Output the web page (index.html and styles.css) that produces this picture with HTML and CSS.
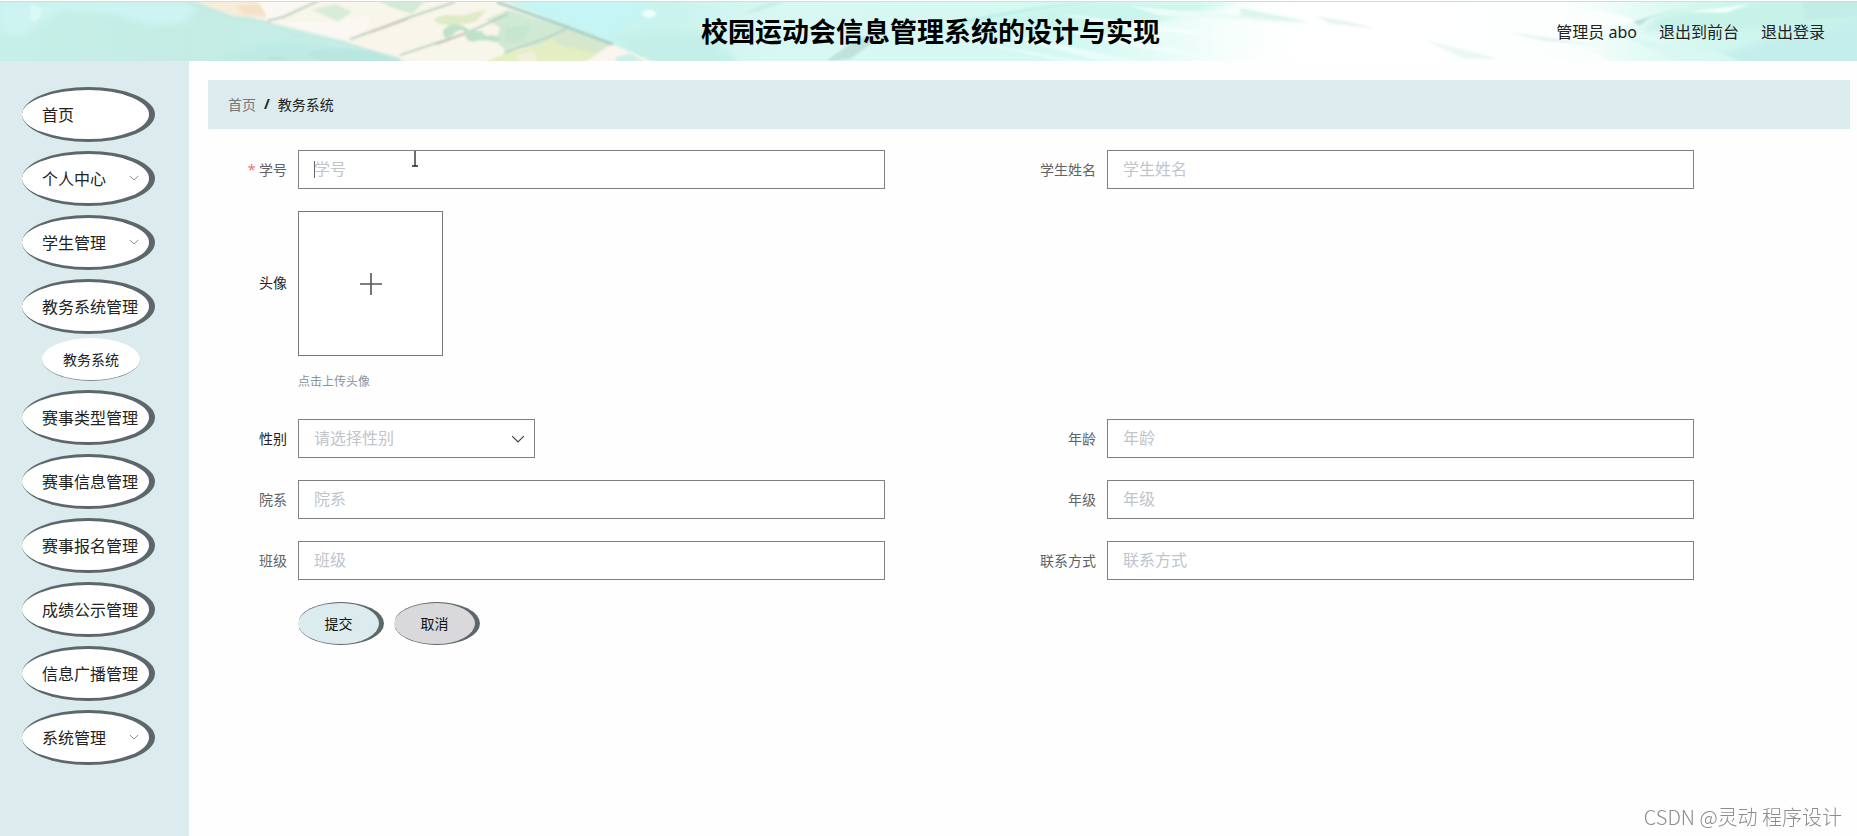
FILE: index.html
```
<!DOCTYPE html>
<html lang="zh-CN">
<head>
  <meta charset="UTF-8" />
  <meta name="viewport" content="width=device-width, initial-scale=1" />
  <title>校园运动会信息管理系统的设计与实现</title>
  <link rel="stylesheet" href="styles.css">
</head>
<body>

  <svg class="defs" aria-hidden="true">
    <symbol id="arrow" viewBox="0 0 12 12">
      <path d="M1 3.5 L6 8.5 L11 3.5" fill="none" stroke="currentColor" stroke-width="1.1" />
    </symbol>
  </svg>

  <header class="header">
    <svg class="header-bg" viewBox="0 0 1857 60" preserveAspectRatio="none" aria-hidden="true">
      <defs>
        <linearGradient id="base" x1="0" x2="1" y1="0" y2="0">
          <stop offset="0" stop-color="#c6efe9" />
          <stop offset="0.1" stop-color="#c4ece4" />
          <stop offset="0.3" stop-color="#c9f4ef" />
          <stop offset="0.36" stop-color="#caf3ee" />
          <stop offset="0.42" stop-color="#d8f8f3" />
          <stop offset="0.58" stop-color="#d4f8f2" />
          <stop offset="0.66" stop-color="#f6fefc" />
          <stop offset="0.7" stop-color="#ffffff" />
          <stop offset="0.84" stop-color="#fdfffe" />
          <stop offset="0.91" stop-color="#d5f8f0" />
          <stop offset="1" stop-color="#c3f1ea" />
        </linearGradient>
        <filter id="soft"><feGaussianBlur stdDeviation="1" /></filter>
        <filter id="softer"><feGaussianBlur stdDeviation="4" /></filter>
      </defs>
      <rect width="1857" height="60" fill="url(#base)" />

      <g filter="url(#softer)">
        <path d="M0 0 H200 L185 22 L150 24 L112 12 L60 8 L40 22 L24 34 L0 32 Z" fill="#cdf4f2" />
        <path d="M205 64 L240 48 L290 38 L340 46 L410 64 Z" fill="#bdebe3" />
        <path d="M500 -6 H625 L655 6 L622 22 L612 42 Z" fill="#c5f5f4" />
        <path d="M612 34 L660 30 L710 32 L740 64 H640 Z" fill="#c4efe9" />
        <path d="M980 20 L1090 0 H1240 L1110 30 L1010 32 Z" fill="#c9f5ec" />
        <path d="M1660 14 L1740 2 H1860 V14 L1760 26 L1640 30 Z" fill="#c6f2e8" />
        <path d="M1690 64 L1780 34 L1860 24 V64 Z" fill="#c4eeec" />
      </g>

      <!-- stadium roof on the left -->
      <g filter="url(#soft)">
        <path d="M186 -4 H498 L613 43 L660 64 H408 L345 40 L266 20 Z" fill="#f8f5ea" />
        <path d="M186 -4 H256 L266 17 L232 14 Z" fill="#f5ecda" />
        <path d="M236 4 L262 2 L266 14 L244 13 Z" fill="#f4e1c8" />
        <path d="M256 -4 H314 L270 19 Z" fill="#fbf8f4" />
        <path d="M312 8 L336 2 L352 10 L338 20 Z" fill="#d9ecdc" />
        <path d="M374 -4 H428 L412 12 L390 5 Z" fill="#d3ead8" />
        <path d="M340 20 L372 12 L366 28 L344 38 L276 20 Z" fill="#fbf8f3" />
        <path d="M434 18 Q440 11 462 14 L486 8 L476 20 L452 24 L438 22 Z" fill="#deebc6" />
        <path d="M508 8 L568 27 L540 44 L506 50 L496 40 L500 26 L486 18 Z" fill="#d0e9d4" />
        <path d="M506 26 L530 22 L524 40 L504 42 Z" fill="#c6e6cf" />
        <path d="M568 27 L610 43 L582 64 H478 L506 52 L540 44 Z" fill="#e3efc2" />
        <path d="M568 27 L612 43 L596 52 L560 44 L552 36 Z" fill="#d5e7cd" />
        <path d="M516 54 L534 50 L538 60 H520 Z" fill="#f2efdb" />
        <path d="M612 45 L650 64 H580 Z" fill="#f8f6ee" />
        <path d="M616 56 L630 52 L650 64 H616 Z" fill="#cdf0e8" />
        <path d="M268 19 L284 15 L318 -1 M350 38 L366 32 L408 16 L455 0 M400 54 L468 31 L508 12 M504 52 L548 36 L568 26" fill="none" stroke="#b9d2c2" stroke-width="2" />
        <path d="M370 31 L408 17 M436 43 L468 31" fill="none" stroke="#cfc5b5" stroke-width="2" />
        <path d="M497 0 L566 25 L613 43" fill="none" stroke="#a9d0c9" stroke-width="3" />
        <path d="M186 0 L230 16 L266 20 L295 33 L345 42 L400 58" fill="none" stroke="#c5e8e0" stroke-width="2" />
        <path d="M443 29 q5 -6 12 -6 t12 4 t14 2 q4 6 8 5 t12 3 q-2 5 -10 3 t-16 0 t-10 -7 t-12 0 t-10 -4" fill="#bfe1ca" />
        <path d="M306 54 Q316 46 345 47 L370 50 L410 62 H330 Z" fill="#b9e6df" />
        <path d="M262 60 L272 54 L292 60 Z" fill="#b9e6df" />
        <path d="M31 3 L42 6 L38 18 L31 20 Z" fill="#dbfaf7" />
      </g>

      <!-- brush strokes -->
      <g filter="url(#soft)">
        <ellipse cx="649" cy="12" rx="7" ry="4" fill="#edfffc" />
        <path d="M742 12 L770 0 H786 L756 10 Z" fill="#c8eee8" />
        <path d="M826 60 L860 36 L880 36 L850 58 Z" fill="#bfe2da" />
        <path d="M955 20 Q1040 2 1100 0 Q1020 8 960 24 Z" fill="#bdf0e7" />
        <path d="M960 38 L1060 56 L1090 60 H1060 Z" fill="#e6fcf8" />
        <path d="M990 30 L1110 54 L1140 60 H1100 Z" fill="#e8fdf9" />
        <path d="M1040 24 L1180 48 L1220 60 L1130 44 Z" fill="#f2fffc" />
        <path d="M1060 12 L1200 30 L1260 36 L1130 28 Z" fill="#f4fffc" />
        <path d="M1130 4 L1290 18 L1310 22 L1160 14 Z" fill="#ecfbf7" />
        <path d="M1240 6 L1290 16 L1310 20 L1262 17 L1240 14 Z" fill="#def5ed" />
        <path d="M1315 14 L1350 20 L1375 27 L1330 22 Z" fill="#e9f5f0" />
        <path d="M1425 39 L1470 50 L1500 58 L1465 58 Z" fill="#ebf8f1" />
        <path d="M1505 30 L1560 38 L1600 44 L1545 40 Z" fill="#e4f5f1" />
        <path d="M1570 6 Q1610 8 1640 20 L1600 26 L1560 16 Z" fill="#fafffe" />
        <path d="M1632 20 L1690 4 L1650 16 L1640 24 Z" fill="#b8e3da" />
        <path d="M1688 10 L1750 2 L1726 11 Z" fill="#f1fffc" />
        <path d="M1540 50 Q1570 42 1600 54 L1610 60 H1550 Z" fill="#fafffd" />
        <path d="M1620 34 L1720 52 L1740 60 H1680 Z" fill="#d9f8f4" />
        <path d="M1800 -4 H1860 V14 L1806 18 Z" fill="#c2ede6" />
      </g>
    </svg>
    <h1 class="title">校园运动会信息管理系统的设计与实现</h1>
    <div class="user-bar">
      <span>管理员 abo</span>
      <a href="#">退出到前台</a>
      <a href="#">退出登录</a>
    </div>
  </header>

  <div class="container">
    <nav class="sidebar">
      <a href="#" class="menu-item">首页</a>
      <a href="#" class="menu-item">个人中心<svg class="menu-arrow"><use href="#arrow" /></svg></a>
      <a href="#" class="menu-item">学生管理<svg class="menu-arrow"><use href="#arrow" /></svg></a>
      <div class="menu-group">
        <a href="#" class="menu-item">教务系统管理<svg class="menu-arrow"><use href="#arrow" /></svg></a>
        <a href="#" class="submenu-item">教务系统</a>
      </div>
      <a href="#" class="menu-item">赛事类型管理<svg class="menu-arrow"><use href="#arrow" /></svg></a>
      <a href="#" class="menu-item">赛事信息管理<svg class="menu-arrow"><use href="#arrow" /></svg></a>
      <a href="#" class="menu-item">赛事报名管理<svg class="menu-arrow"><use href="#arrow" /></svg></a>
      <a href="#" class="menu-item">成绩公示管理<svg class="menu-arrow"><use href="#arrow" /></svg></a>
      <a href="#" class="menu-item">信息广播管理<svg class="menu-arrow"><use href="#arrow" /></svg></a>
      <a href="#" class="menu-item">系统管理<svg class="menu-arrow"><use href="#arrow" /></svg></a>
    </nav>

    <main class="main">
      <div class="breadcrumb">
        <a href="#">首页</a>
        <b>/</b>
        <span>教务系统</span>
      </div>

      <form class="form">
        <div class="field">
          <label for="xuehao"><i>*</i> 学号</label>
          <div class="control">
            <input type="text" id="xuehao" placeholder="学号" />
            <span class="caret"></span>
            <svg class="pointer" viewBox="0 0 8 16" aria-hidden="true">
              <path d="M4 0 V14.5 M1 15 H7" fill="none" stroke="#222" stroke-width="1.3" />
            </svg>
          </div>
        </div>
        <div class="field">
          <label for="xingming">学生姓名</label>
          <div class="control"><input type="text" id="xingming" placeholder="学生姓名" /></div>
        </div>

        <div class="field field-upload">
          <label for="touxiang" class="dark">头像</label>
          <div class="control">
            <button type="button" class="upload" id="touxiang" aria-label="点击上传头像">
              <svg viewBox="0 0 24 24"><path d="M12 1 V23 M1 12 H23" stroke="#555" stroke-width="1.6" /></svg>
            </button>
            <p class="tip">点击上传头像</p>
          </div>
        </div>

        <div class="field">
          <label for="xingbie" class="dark">性别</label>
          <div class="control">
            <div class="select">
              <select id="xingbie">
                <option value="">请选择性别</option>
              </select>
              <svg class="select-arrow"><use href="#arrow" /></svg>
            </div>
          </div>
        </div>
        <div class="field">
          <label for="nianling">年龄</label>
          <div class="control"><input type="text" id="nianling" placeholder="年龄" /></div>
        </div>

        <div class="field">
          <label for="yuanxi">院系</label>
          <div class="control"><input type="text" id="yuanxi" placeholder="院系" /></div>
        </div>
        <div class="field">
          <label for="nianji">年级</label>
          <div class="control"><input type="text" id="nianji" placeholder="年级" /></div>
        </div>

        <div class="field">
          <label for="banji">班级</label>
          <div class="control"><input type="text" id="banji" placeholder="班级" /></div>
        </div>
        <div class="field">
          <label for="lianxi">联系方式</label>
          <div class="control"><input type="text" id="lianxi" placeholder="联系方式" /></div>
        </div>

        <div class="buttons">
          <button type="button" class="btn">提交</button>
          <button type="button" class="btn btn-cancel">取消</button>
        </div>
      </form>
    </main>
  </div>

  <div class="watermark">CSDN @灵动 程序设计</div>

</body>
</html>
```
FILE: styles.css
```
* {
  box-sizing: border-box;
}

body {
  margin: 0;
  padding-top: 1px;
  min-height: 100vh;
  display: flex;
  flex-direction: column;
  background: #fefefe;
  color: #222;
  font-family: "Noto Sans", "Noto Sans CJK SC", sans-serif;
  font-size: 14px;
}

a {
  color: inherit;
  text-decoration: none;
}

input, select, button {
  font-family: inherit;
}

.defs {
  position: absolute;
  width: 0;
  height: 0;
}

/* header */
.header {
  position: relative;
  height: 60px;
  border-top: 1px solid #d3dcdb;
  display: grid;
  grid-template-columns: 1fr auto 1fr;
  align-items: center;
  padding: 0 32px 0 36px;
}

.header-bg {
  position: absolute;
  inset: 0;
  width: 100%;
  height: 100%;
}

.title {
  position: relative;
  grid-column: 2;
  margin: 0;
  font-size: 27px;
  line-height: 40px;
  font-weight: bold;
  color: #000;
}

.user-bar {
  position: relative;
  display: flex;
  justify-content: flex-end;
  gap: 22px;
  padding-bottom: 2px;
  font-size: 16px;
}

/* sidebar */
.container {
  flex: 1;
  display: flex;
}

.sidebar {
  width: 189px;
  flex-shrink: 0;
  padding: 26px 34px 20px 22px;
  background: #dcebee;
  display: flex;
  flex-direction: column;
  gap: 9px;
}

.menu-item {
  position: relative;
  height: 55px;
  display: flex;
  align-items: center;
  padding: 0 0 2px 20px;
  background: #fff;
  border: solid #5b676b;
  border-width: 3px 6px 3px 0;
  border-radius: 50%;
  font-size: 16px;
  white-space: nowrap;
}

.menu-arrow {
  position: absolute;
  right: 10px;
  width: 10px;
  height: 10px;
  color: #808388;
}

.submenu-item {
  height: 43px;
  margin: 4px 15px 0 20px;
  display: flex;
  align-items: center;
  justify-content: center;
  background: #fff;
  border-bottom: 1px solid #7d878a;
  border-radius: 50%;
}

/* content */
.main {
  flex: 1;
  padding: 19px 7px 20px 19px;
}

.breadcrumb {
  height: 49px;
  display: flex;
  align-items: center;
  gap: 8px;
  padding: 0 20px 2px;
  background: #dcebee;
}

.breadcrumb a {
  color: #777;
}

.form {
  display: grid;
  grid-template-columns: 1fr 1fr;
  gap: 22px 132px;
  padding: 21px 156px 0 0;
}

.field {
  display: flex;
  align-items: center;
}

.field label {
  width: 90px;
  flex-shrink: 0;
  padding: 0 11px 2px 0;
  text-align: right;
  color: #606266;
  white-space: nowrap;
}

.field label.dark {
  color: #222;
}

.field label i {
  font-style: normal;
  color: #f56c6c;
}

.control {
  position: relative;
  flex: 1;
}

.control input, .control select {
  display: block;
  width: 100%;
  height: 39px;
  padding: 0 15px 2px;
  border: 1px solid #808080;
  border-radius: 0;
  background: #fff;
  font-size: 16px;
  outline: none;
}

.control input::placeholder {
  color: #c0c4cc;
}

.control select {
  appearance: none;
  color: #c0c4cc;
}

.select {
  position: relative;
  width: 237px;
}

.select-arrow {
  position: absolute;
  right: 10px;
  top: 13px;
  width: 14px;
  height: 14px;
  color: #444;
  pointer-events: none;
}

.caret {
  position: absolute;
  left: 16px;
  top: 11px;
  width: 1px;
  height: 17px;
  background: #666;
}

.pointer {
  position: absolute;
  left: 113px;
  top: 1px;
  width: 8px;
  height: 16px;
}

.field-upload {
  grid-column: 1 / -1;
  align-items: flex-start;
}

.field-upload label {
  line-height: 143px;
}

.upload {
  width: 145px;
  height: 145px;
  display: flex;
  align-items: center;
  justify-content: center;
  padding: 0;
  border: 1px solid #777;
  background: #fff;
  cursor: pointer;
}

.upload svg {
  width: 24px;
  height: 24px;
}

.tip {
  margin: 16px 0 6px;
  font-size: 12px;
  line-height: 19px;
  color: #8a939e;
}

.buttons {
  grid-column: 1 / -1;
  display: flex;
  gap: 10px;
  padding-left: 90px;
}

.btn {
  width: 86px;
  height: 43px;
  padding: 0 0 2px;
  border: solid #5b676b;
  border-width: 1px 5px 1px 0;
  border-radius: 50%;
  background: #dcebee;
  font-size: 14px;
  color: #111;
  cursor: pointer;
}

.btn-cancel {
  background: #d9d9db;
}

.watermark {
  position: fixed;
  right: 15px;
  bottom: 4px;
  font-family: "Noto Sans CJK SC", sans-serif;
  font-weight: 300;
  font-size: 20px;
  line-height: 30px;
  color: #8c8c8c;
}
```
